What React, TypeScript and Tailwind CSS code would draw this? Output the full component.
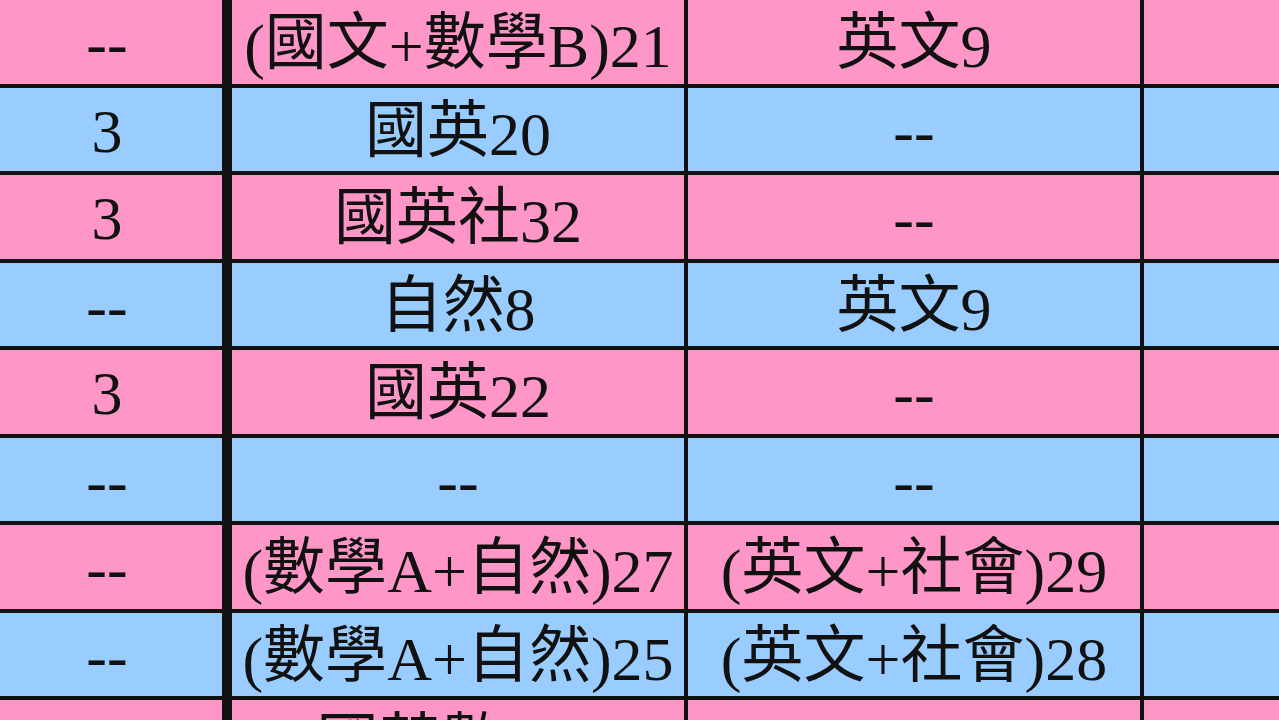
import React from "react";

type Row = { bg: "pink" | "blue"; c1: string; c2: string; c3: string };

const rows: Row[] = [
  { bg: "pink", c1: "--", c2: "(國文+數學B)21", c3: "英文9" },
  { bg: "blue", c1: "3", c2: "國英20", c3: "--" },
  { bg: "pink", c1: "3", c2: "國英社32", c3: "--" },
  { bg: "blue", c1: "--", c2: "自然8", c3: "英文9" },
  { bg: "pink", c1: "3", c2: "國英22", c3: "--" },
  { bg: "blue", c1: "--", c2: "--", c3: "--" },
  { bg: "pink", c1: "--", c2: "(數學A+自然)27", c3: "(英文+社會)29" },
  { bg: "blue", c1: "--", c2: "(數學A+自然)25", c3: "(英文+社會)28" },
  { bg: "pink", c1: "3", c2: "國英數+32", c3: "" },
];

const cjk = /[\u3400-\u9fff]/;

function Text({ s }: { s: string }) {
  const parts: { t: string; c: boolean }[] = [];
  for (const ch of s) {
    const c = cjk.test(ch);
    const last = parts[parts.length - 1];
    if (last && last.c === c) last.t += ch;
    else parts.push({ t: ch, c });
  }
  return (
    <span className="whitespace-nowrap">
      {parts.map((p, i) =>
        p.c ? (
          <span key={i} className="align-[3px]">
            {p.t}
          </span>
        ) : (
          <span key={i}>{p.t}</span>
        )
      )}
    </span>
  );
}

export default function App() {
  return (
    <div className="h-[720px] w-[1279px] overflow-hidden bg-white">
      <div
        className="-ml-[12px] -mt-[4px] w-[1400px] border-t-4 border-[#111] text-[62px] leading-[62px] text-[#111]"
        style={{ fontFamily: '"Liberation Serif", "Noto Sans CJK TC", serif' }}
      >
        {rows.map((r, i) => (
          <div
            key={i}
            className={`flex h-[87.5px] border-b-4 border-[#111] ${
              r.bg === "pink" ? "bg-[#ff96c8]" : "bg-[#99ccff]"
            }`}
          >
            <div className="flex w-[244px] shrink-0 justify-center border-l-4 border-r-[10px] border-[#111] pt-[12px]">
              <Text s={r.c1} />
            </div>
            <div className="flex w-[456px] shrink-0 justify-center border-r-4 border-[#111] pt-[12px]">
              <Text s={r.c2} />
            </div>
            <div className="flex w-[456px] shrink-0 justify-center border-r-4 border-[#111] pt-[12px]">
              <Text s={r.c3} />
            </div>
            <div className="flex-1" />
          </div>
        ))}
      </div>
    </div>
  );
}
